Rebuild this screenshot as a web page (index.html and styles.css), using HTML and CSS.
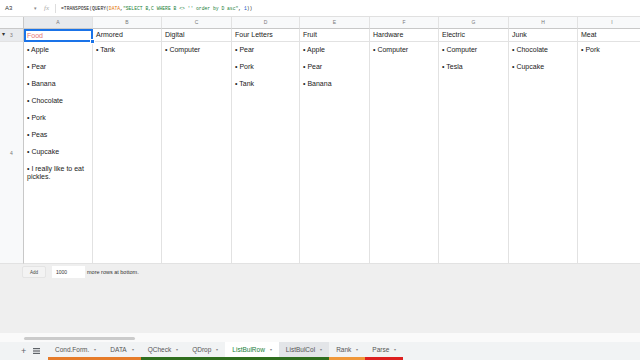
FILE: index.html
```html
<!DOCTYPE html>
<html lang="en">
<head>
  <meta charset="UTF-8">
  <meta name="viewport" content="width=device-width, initial-scale=1.0">
  <title>ListBulRow - Sheets</title>
  <link rel="stylesheet" href="styles.css">
</head>
<body>
  <div class="formula-bar">
    <div class="name-box">A3</div>
    <div class="caret">▾</div>
    <div class="fx">fx</div>
    <div class="formula">=TRANSPOSE(QUERY(<span class="f-range">DATA</span>,<span class="f-str">"SELECT B,C WHERE B &lt;&gt; '' order by D asc"</span>, <span class="f-num">1</span>))</div>
  </div>

  <div class="sheet-wrap">
    <div class="sheet">
      <div class="corner"></div>
      <div class="col-head sel">A</div>
      <div class="col-head">B</div>
      <div class="col-head">C</div>
      <div class="col-head">D</div>
      <div class="col-head">E</div>
      <div class="col-head">F</div>
      <div class="col-head">G</div>
      <div class="col-head">H</div>
      <div class="col-head">I</div>

      <div class="row-head sel"><span class="freeze">▾</span>3</div>
      <div class="cell active food">Food<span class="handle"></span></div>
      <div class="cell">Armored</div>
      <div class="cell">Digital</div>
      <div class="cell">Four Letters</div>
      <div class="cell">Fruit</div>
      <div class="cell">Hardware</div>
      <div class="cell">Electric</div>
      <div class="cell">Junk</div>
      <div class="cell">Meat</div>

      <div class="row-head">4</div>
      <div class="cell list">
        <div>• Apple</div>
        <div>• Pear</div>
        <div>• Banana</div>
        <div>• Chocolate</div>
        <div>• Pork</div>
        <div>• Peas</div>
        <div>• Cupcake</div>
        <div>• I really like to eat pickles.</div>
      </div>
      <div class="cell list"><div>• Tank</div></div>
      <div class="cell list"><div>• Computer</div></div>
      <div class="cell list">
        <div>• Pear</div>
        <div>• Pork</div>
        <div>• Tank</div>
      </div>
      <div class="cell list">
        <div>• Apple</div>
        <div>• Pear</div>
        <div>• Banana</div>
      </div>
      <div class="cell list"><div>• Computer</div></div>
      <div class="cell list">
        <div>• Computer</div>
        <div>• Tesla</div>
      </div>
      <div class="cell list">
        <div>• Chocolate</div>
        <div>• Cupcake</div>
      </div>
      <div class="cell list"><div>• Pork</div></div>
    </div>
  </div>

  <div class="more-rows">
    <div class="add-row">
      <div class="add-btn">Add</div>
      <div class="add-input">1000</div>
      <div class="add-text">more rows at bottom.</div>
    </div>
  </div>

  <div class="hscroll"><div class="thumb"></div></div>

  <div class="tab-bar">
    <div class="tab-tools">
      <span class="plus">+</span>
      <svg class="list-icon" width="7" height="6" viewBox="0 0 7 6">
        <rect x="0" y="0" width="7" height="1.2" fill="#5f6368"/>
        <rect x="0" y="2.4" width="7" height="1.2" fill="#5f6368"/>
        <rect x="0" y="4.8" width="7" height="1.2" fill="#5f6368"/>
      </svg>
    </div>
    <div class="tab orange">Cond.Form.<span class="tab-caret">▾</span></div>
    <div class="tab orange">DATA<span class="tab-caret">▾</span></div>
    <div class="tab green">QCheck<span class="tab-caret">▾</span></div>
    <div class="tab green">QDrop<span class="tab-caret">▾</span></div>
    <div class="tab green current">ListBulRow<span class="tab-caret">▾</span></div>
    <div class="tab green hover">ListBulCol<span class="tab-caret">▾</span></div>
    <div class="tab amber">Rank<span class="tab-caret">▾</span></div>
    <div class="tab red">Parse<span class="tab-caret">▾</span></div>
  </div>
</body>
</html>
```

FILE: styles.css
```css
* {
  box-sizing: border-box;
}
body {
  margin: 0;
  width: 640px;
  height: 360px;
  overflow: hidden;
  background: #fff;
  font-family: "Liberation Sans", Arial, sans-serif;
  color: #222;
}

/* formula bar */
.formula-bar {
  height: 17px;
  display: flex;
  align-items: center;
  border-bottom: 1px solid #e0e0e0;
  font-size: 6px;
}
.name-box {
  width: 34px;
  padding-left: 5px;
  color: #333;
}
.caret {
  width: 10px;
  font-size: 5px;
  color: #888;
}
.fx {
  width: 12px;
  font-family: "Liberation Serif", serif;
  font-style: italic;
  font-size: 7px;
  color: #aaa;
  border-right: 1px solid #ddd;
  height: 9px;
  line-height: 9px;
  margin-right: 5px;
}
.formula {
  font-family: "Liberation Mono", monospace;
  font-size: 4.7px;
  color: #222;
}
.f-range {
  color: #e37400;
}
.f-str {
  color: #188038;
}
.f-num {
  color: #1155cc;
}

/* grid */
.sheet-wrap {
  height: 247px;
  overflow: hidden;
}
.sheet {
  display: grid;
  grid-template-columns: 24px 69px 69px 70px 68px 70px 69px 70px 69px 69px;
  grid-template-rows: 12px 13px 222px;
  width: 647px;
}
.corner,
.col-head,
.row-head,
.cell {
  border-right: 1px solid #e2e2e2;
  border-bottom: 1px solid #e2e2e2;
}
.corner {
  background: #f8f9fa;
  border-right: 1px solid #c8c8c8;
  border-bottom: 1px solid #c8c8c8;
}
.col-head {
  background: #f8f9fa;
  color: #777;
  font-size: 5px;
  text-align: center;
  line-height: 11px;
  border-bottom-color: #c8c8c8;
}
.row-head {
  background: #f8f9fa;
  color: #777;
  font-size: 5px;
  display: flex;
  align-items: center;
  justify-content: center;
  border-right-color: #c8c8c8;
  position: relative;
}
.sel {
  background: #e8eaed;
}
.freeze {
  position: absolute;
  left: 2px;
  top: 1px;
  font-size: 6px;
  color: #333;
}
.cell {
  font-size: 7px;
  padding: 0 3px;
  line-height: 12px;
  white-space: nowrap;
  overflow: visible;
}
.cell.food {
  color: #e57373;
}
.cell.active {
  position: relative;
  border: 2px solid #1a73e8;
  line-height: 9px;
  padding-left: 1px;
}
.handle {
  position: absolute;
  right: -4px;
  bottom: -4px;
  width: 5px;
  height: 5px;
  background: #1a73e8;
  border: 1px solid #fff;
}
.cell.list {
  white-space: normal;
  line-height: 8.5px;
  padding-top: 3.5px;
}
.cell.list div {
  margin-bottom: 8.5px;
}

/* add rows area */
.more-rows {
  height: 69px;
  background: #efefef;
}
.add-row {
  display: flex;
  align-items: center;
  padding: 2px 0 0 22px;
  font-size: 5.5px;
  color: #333;
}
.add-btn {
  width: 24px;
  height: 12px;
  line-height: 12px;
  text-align: center;
  background: #f3f3f3;
  border: 1px solid #e4e4e4;
  border-radius: 2px;
  font-size: 4.5px;
  color: #444;
}
.add-input {
  width: 33px;
  height: 12px;
  line-height: 12px;
  margin-left: 6px;
  padding-left: 4px;
  background: #fff;
  font-size: 5px;
}
.add-text {
  margin-left: 2px;
}

/* horizontal scrollbar */
.hscroll {
  height: 9px;
  background: #fafafa;
  padding: 4px 0 0 24px;
}
.thumb {
  width: 111px;
  height: 3px;
  border-radius: 2px;
  background: #cbcbcb;
}

/* sheet tabs */
.tab-bar {
  height: 18px;
  display: flex;
  background: #f1f3f4;
  font-size: 6.5px;
  color: #555;
}
.tab-tools {
  width: 48px;
  display: flex;
  align-items: center;
  padding-left: 21px;
  gap: 7px;
}
.plus {
  font-size: 9px;
  color: #5f6368;
  line-height: 9px;
}
.tab {
  display: flex;
  align-items: center;
  padding: 0 7px 0 7px;
  border-bottom: 3px solid transparent;
  white-space: nowrap;
}
.tab-caret {
  font-size: 4px;
  color: #888;
  margin-left: 5px;
}
.tab.orange {
  border-bottom-color: #e67c2a;
}
.tab.green {
  border-bottom-color: #2f6e1e;
}
.tab.amber {
  border-bottom-color: #f0983a;
}
.tab.red {
  border-bottom-color: #dd2020;
}
.tab.current {
  background: #fff;
  color: #188038;
}
.tab.hover {
  background: #e3e5e8;
}
```
